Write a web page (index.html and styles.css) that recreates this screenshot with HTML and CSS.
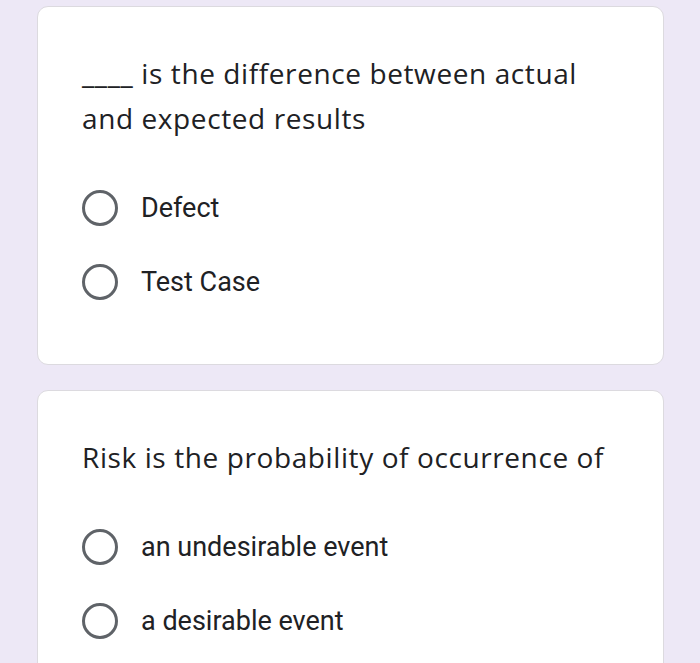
FILE: index.html
```html
<!DOCTYPE html>
<html>
<head>
<meta charset="utf-8">
<link rel="stylesheet" href="styles.css">
</head>
<body>
<div class="page">
  <div class="card">
    <div class="question">____ is the difference between actual and expected results</div>
    <div class="options">
      <div class="option"><span class="radio"></span><span class="label">Defect</span></div>
      <div class="option"><span class="radio"></span><span class="label">Test Case</span></div>
    </div>
  </div>
  <div class="card">
    <div class="question">Risk is the probability of occurrence of</div>
    <div class="options">
      <div class="option"><span class="radio"></span><span class="label">an undesirable event</span></div>
      <div class="option"><span class="radio"></span><span class="label">a desirable event</span></div>
    </div>
  </div>
</div>
</body>
</html>
```
FILE: styles.css
```css
html, body {
  margin: 0;
  padding: 0;
  background: #ede8f6;
}
.page {
  display: flex;
  flex-direction: column;
  gap: 25px;
  padding: 6px 36px 0 37px;
}
.card {
  background: #fff;
  border: 1px solid #dcdadf;
  border-radius: 11px;
  padding: 44px 44px 64px 44px;
}
.question {
  font-family: "Open Sans", sans-serif;
  font-size: 28px;
  letter-spacing: 0.6px;
  line-height: 45px;
  color: #202124;
  margin-bottom: 49px;
}
.options {
  display: flex;
  flex-direction: column;
  gap: 38px;
}
.option {
  display: flex;
  align-items: center;
  gap: 23px;
  height: 36px;
}
.radio {
  width: 36px;
  height: 36px;
  box-sizing: border-box;
  border: 3.5px solid #5f6368;
  border-radius: 50%;
  flex: none;
}
.label {
  font-family: Roboto, sans-serif;
  font-size: 27px;
  color: #202124;
}
```
